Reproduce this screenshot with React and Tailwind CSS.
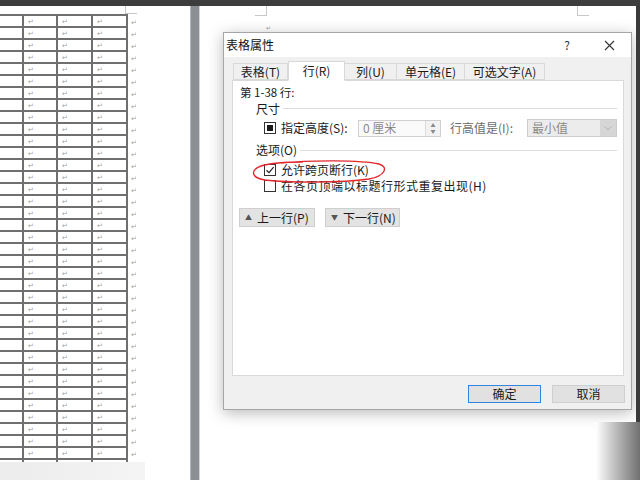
import React from 'react';

const rows = Array.from({ length: 37 }, (_, i) => i);

const cjk = { fontFamily: '"Noto Sans CJK SC", "Noto Sans", sans-serif' };

function Mark() {
	return <span className="text-[7px] leading-none text-[#a0a0a0]">↵</span>;
}

function TableRow({ empty }) {
	return (
		<div className="flex items-start">
			<div className="flex h-[12px] w-[128px] border-b-2 border-[#6f6f6f]">
				<div className="w-[24px] border-r-2 border-[#6f6f6f]" />
				<div className="flex w-[34px] items-center border-r-2 border-[#6f6f6f] pl-[4px]">
					{!empty && <Mark />}
				</div>
				<div className="flex w-[35px] items-center border-r-2 border-[#6f6f6f] pl-[4px]">
					{!empty && <Mark />}
				</div>
				<div className="flex w-[35px] items-center border-r-2 border-[#6f6f6f] pl-[4px]">
					{!empty && <Mark />}
				</div>
			</div>
			<div className="flex h-[12px] items-center pl-[3px]">
				{!empty && <Mark />}
			</div>
		</div>
	);
}

function CheckBox({ state }) {
	return (
		<div className="flex h-[12px] w-[12px] shrink-0 items-center justify-center border border-[#333] bg-white">
			{state === 'mixed' && <div className="h-[6px] w-[6px] bg-[#1a1a1a]" />}
			{state === 'checked' && (
				<svg width="10" height="10" viewBox="0 0 10 10">
					<path d="M1.5 5.2 L4 7.6 L8.6 2.2" fill="none" stroke="#222" strokeWidth="1.2" />
				</svg>
			)}
		</div>
	);
}

function Tab({ label, width, active }) {
	return (
		<div
			className={
				'flex items-center justify-center border border-[#d9d9d9] text-[12px] text-[#1a1a1a] ' +
				(active
					? 'z-10 -mb-px h-[20px] border-b-white bg-white'
					: 'h-[17px] bg-[#f0f0f0] -ml-px')
			}
			style={{ width }}
		>
			{label}
		</div>
	);
}

function Dialog() {
	return (
		<div
			className="absolute left-[23px] top-[26px] flex h-[378px] w-[409px] flex-col border border-[#a6a6a6] bg-[#f0f0f0] shadow-[0_3px_14px_rgba(0,0,0,0.28)]"
			style={cjk}
		>
			{/* title bar */}
			<div className="flex h-[24px] shrink-0 items-center bg-white pl-[2px] text-[12px] text-[#111]">
				<span>表格属性</span>
				<span className="ml-auto mr-[34px] text-[12px] text-[#333]">?</span>
				<svg className="mr-[16px]" width="11" height="11" viewBox="0 0 11 11">
					<path d="M1 1 L10 10 M10 1 L1 10" stroke="#333" strokeWidth="1.1" />
				</svg>
			</div>

			<div className="flex flex-1 flex-col pl-[8px] pr-[7px] pt-[5px]">
				{/* tabs */}
				<div className="flex h-[18px] shrink-0 items-end pl-[2px]">
					<Tab label="表格(T)" width={55} />
					<Tab label="行(R)" width={57} active />
					<Tab label="列(U)" width={53} />
					<Tab label="单元格(E)" width={69} />
					<Tab label="可选文字(A)" width={81} />
				</div>

				{/* panel */}
				<div className="relative flex h-[296px] shrink-0 flex-col border border-[#d9d9d9] bg-white text-[12px] text-[#1a1a1a]">
					<div className="mt-[4px] flex h-[15px] items-center pl-[7px] text-[11.5px] leading-none">
						<span>第 1-38 行:</span>
					</div>
					<div className="flex h-[17px] items-center pl-[23px] pr-[6px] leading-none">
						<span>尺寸</span>
						<div className="ml-[3px] h-px flex-1 bg-[#dcdcdc]" />
					</div>
					<div className="mt-[2px] flex h-[18px] items-center pl-[31px] leading-none">
						<CheckBox state="mixed" />
						<span className="ml-[5px] w-[77px]">指定高度(S):</span>
						<div className="flex h-[17px] w-[83px] items-center border border-[#cfcfcf] bg-[#fafafa]">
							<span className="flex-1 pl-[4px] text-[#8a8a8a]">0 厘米</span>
							<div className="flex h-full w-[15px] flex-col items-center justify-center border-l border-[#dcdcdc] bg-[#f2f2f2] text-[5px] leading-[6px] text-[#888]">
								<span>▲</span>
								<span>▼</span>
							</div>
						</div>
						<span className="ml-[9px] w-[77px] text-[#6d6d6d]">行高值是(I):</span>
						<div className="flex h-[18px] w-[90px] items-center border border-[#cccccc] bg-[#ececec]">
							<span className="flex-1 pl-[4px] text-[#8a8a8a]">最小值</span>
							<div className="flex h-full w-[16px] items-center justify-center bg-[#d6d6d6]">
								<svg width="8" height="5" viewBox="0 0 8 5">
									<path d="M0.5 0.5 L4 4 L7.5 0.5" fill="none" stroke="#b0b0b0" strokeWidth="1" />
								</svg>
							</div>
						</div>
					</div>
					<div className="mt-[6px] flex h-[14px] items-center pl-[23px] pr-[6px] leading-none">
						<span>选项(O)</span>
						<div className="ml-[3px] h-px flex-1 bg-[#dcdcdc]" />
					</div>
					<div className="mt-[5px] flex h-[16px] items-center pl-[31px] leading-none">
						<CheckBox state="checked" />
						<span className="ml-[5px]">允许跨页断行(K)</span>
					</div>
					<div className="flex h-[16px] items-center pl-[31px] leading-none">
						<CheckBox />
						<span className="ml-[5px] tracking-[0.5px]">在各页顶端以标题行形式重复出现(H)</span>
					</div>
					<div className="mt-[14px] flex h-[19px] gap-[10px] pl-[6px] leading-none">
						<div className="flex w-[76px] items-center border border-[#cfcfcf] bg-[#e3e3e3] pl-[5px]">
							<span className="text-[7px] text-[#555]">▲</span>
							<span className="ml-[5px]">上一行(P)</span>
						</div>
						<div className="flex w-[75px] items-center border border-[#cfcfcf] bg-[#e3e3e3] pl-[5px]">
							<span className="text-[7px] text-[#555]">▼</span>
							<span className="ml-[5px]">下一行(N)</span>
						</div>
					</div>

					{/* red pen annotation */}
					<svg className="absolute left-[18px] top-[79px]" width="136" height="24" viewBox="0 0 136 24">
						<path
							d="M30 3 C60 0 110 0 128 4 C138 7 134 16 118 19 C90 23 40 23 14 20 C0 18 -1 10 10 6 C20 3 40 2 52 2"
							fill="none"
							stroke="#e3262c"
							strokeWidth="1.4"
						/>
					</svg>
				</div>

				{/* footer buttons */}
				<div className="mt-[9px] flex h-[18px] shrink-0 justify-end gap-[11px] text-[12px] leading-none text-[#1a1a1a]">
					<div className="flex w-[73px] items-center justify-center border border-[#2f86dc] bg-[#e1e1e1]">确定</div>
					<div className="-mr-[1px] flex w-[73px] items-center justify-center border border-[#cfcfcf] bg-[#e1e1e1]">取消</div>
				</div>
			</div>
		</div>
	);
}

export default function App() {
	return (
		<div className="flex h-[480px] w-[640px] flex-col overflow-hidden bg-white" style={cjk}>
			<div className="h-[6px] shrink-0 bg-[#3d3d3d]" />
			<div className="flex min-h-0 flex-1">
				{/* left page with the table */}
				<div className="relative flex min-h-0 w-[190px] flex-col bg-white">
					<div className="absolute left-[125px] top-0 h-[8px] w-[12px] border-b border-l border-[#c8c8c8]" />
					<div className="h-[8px] shrink-0" />
					<div className="min-h-0 flex-1 overflow-hidden">
						<div className="h-[2px] w-[128px] bg-[#6f6f6f]" />
						{rows.map((r) => (
							<TableRow key={r} />
						))}
						<TableRow empty />
					</div>
					<div className="h-[18px] w-[145px] shrink-0 bg-gradient-to-r from-[#ececec] to-[#f4f4f4]" />
				</div>

				<div className="w-[10px] border-l border-r border-l-[#b5b8bc] border-r-[#cfd2d6] bg-[#8b8e92]" />

				{/* right page with the dialog */}
				<div className="relative flex-1 bg-white">
					<div className="absolute left-[55px] top-0 h-[10px] w-[12px] border-b border-r border-[#c8c8c8]" />
					<div className="absolute left-[377px] top-0 h-[10px] w-[12px] border-b border-l border-[#c8c8c8]" />
					<div className="absolute left-[66px] top-[17px] text-[6px] text-[#a0a0a0]">↵</div>
					<Dialog />
					<div className="absolute right-0 top-0 h-[416px] w-[4px] bg-[#3a3a3a]" />
					<div className="absolute bottom-0 right-0 h-[58px] w-[44px] bg-gradient-to-r from-white to-[#707070]" />
				</div>
			</div>
		</div>
	);
}
